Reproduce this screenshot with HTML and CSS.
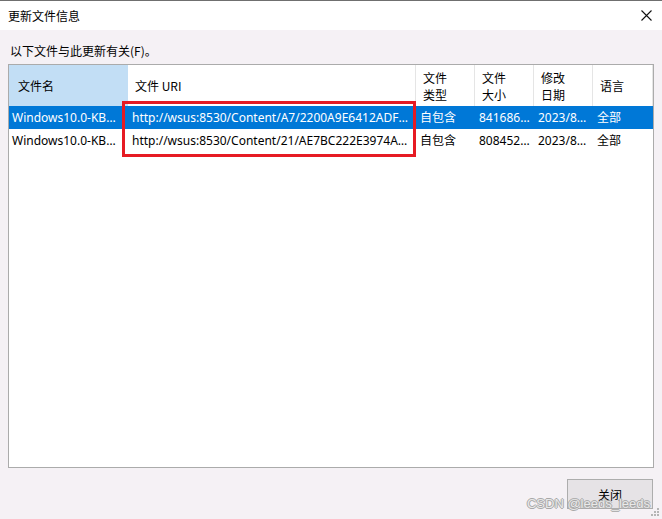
FILE: index.html
```html
<!DOCTYPE html>
<html lang="zh-CN">

<head>
    <meta charset="UTF-8">
    <meta name="viewport" content="width=device-width, initial-scale=1.0">
    <link rel="stylesheet" href="styles.css">
    <title>更新文件信息</title>
</head>

<body>
    <div class="dialog">
        <div class="titlebar">
            <span class="title">更新文件信息</span>
            <svg class="close" width="11" height="11" viewBox="0 0 11 11">
                <path d="M0.5 0.5 L10.5 10.5 M10.5 0.5 L0.5 10.5" stroke="#111" stroke-width="1.1" fill="none" />
            </svg>
        </div>

        <div class="client">
            <div class="label">以下文件与此更新有关(F)。</div>

            <div class="list">
                <div class="row header">
                    <div class="cell hot">文件名</div>
                    <div class="cell">文件 URI</div>
                    <div class="cell">文件<br>类型</div>
                    <div class="cell">文件<br>大小</div>
                    <div class="cell">修改<br>日期</div>
                    <div class="cell">语言</div>
                </div>
                <div class="row item selected">
                    <div class="cell">Windows10.0-KB5029244-x64.cab</div>
                    <div class="cell">http://wsus:8530/Content/A7/2200A9E6412ADF0123456789.cab</div>
                    <div class="cell">自包含</div>
                    <div class="cell">841686000</div>
                    <div class="cell">2023/8/8 15:00</div>
                    <div class="cell">全部</div>
                </div>
                <div class="row item">
                    <div class="cell">Windows10.0-KB5029244-x86.cab</div>
                    <div class="cell">http://wsus:8530/Content/21/AE7BC222E3974A0123456789.cab</div>
                    <div class="cell">自包含</div>
                    <div class="cell">808452000</div>
                    <div class="cell">2023/8/8 15:00</div>
                    <div class="cell">全部</div>
                </div>

                <!-- red marker around the URI column -->
                <div class="mark"></div>
            </div>

            <div class="actions">
                <button class="btn">关闭</button>
            </div>
        </div>

        <div class="watermark">CSDN @leeds_leeds</div>
        <div class="grip"></div>
    </div>
</body>

</html>
```

FILE: styles.css
```css
body {
    margin: 0;
    font-family: "Noto Sans", "Noto Sans CJK SC", sans-serif;
    font-size: 12px;
    color: #000;
}

.dialog {
    position: relative;
    width: 662px;
    height: 519px;
    display: flex;
    flex-direction: column;
    background: #f5f1f5;
    overflow: hidden;
}

.titlebar {
    height: 30px;
    border-top: 1px solid #6f6f6f;
    background: #fff;
    display: flex;
    align-items: center;
    justify-content: space-between;
    padding: 0 10px 0 8px;
}

.title {
    font-family: "Noto Sans CJK SC", sans-serif;
    font-size: 12px;
    margin-top: -1px;
}

.close {
    display: block;
    margin-top: -1px;
}

.client {
    flex: 1;
    display: flex;
    flex-direction: column;
    padding: 13px 8px 10px 8px;
}

.label {
    height: 16px;
    line-height: 16px;
    padding-left: 2px;
    font-family: "Noto Sans CJK SC", sans-serif;
}

.list {
    position: relative;
    margin-top: 5px;
    height: 402px;
    border: 1px solid #ababab;
    background: #fff;
}

.row {
    display: grid;
    grid-template-columns: 119px 288px 59px 59px 59px 60px;
}

.header .cell {
    height: 41px;
    display: flex;
    align-items: center;
    line-height: 17px;
    padding-left: 7px;
    border-right: 1px solid #e5e5e5;
    font-family: "Noto Sans CJK SC", sans-serif;
}

.header .cell:first-child {
    padding-left: 9px;
}

.header .hot {
    background: #c2def5;
    border-right-color: #c2def5;
}

.item .cell {
    height: 23px;
    line-height: 23px;
    padding: 0 4px;
    white-space: nowrap;
    overflow: hidden;
    text-overflow: ellipsis;
}

.item .cell:first-child {
    padding-left: 3px;
    padding-right: 6px;
}

.selected {
    background: #0078d7;
    color: #fff;
}

.mark {
    position: absolute;
    left: 113px;
    top: 36px;
    width: 288px;
    height: 50px;
    border: 3px solid #e61b23;
}

.actions {
    display: flex;
    justify-content: flex-end;
    margin-top: 11px;
}

.btn {
    width: 86px;
    height: 30px;
    margin-right: 1px;
    border: 1px solid #adadad;
    background: #e6e3e6;
    font-family: "Noto Sans CJK SC", sans-serif;
    font-size: 12px;
    color: #000;
    padding: 0;
}

/* light outlined watermark over the bottom-right corner */
.watermark {
    position: absolute;
    right: 12px;
    bottom: 8px;
    font-family: "Liberation Sans", sans-serif;
    font-size: 13px;
    color: #e9e9e9;
    text-shadow: 1px 0 0 #a8a8a8, -1px 0 0 #a8a8a8, 0 1px 0 #a8a8a8, 0 -1px 0 #a8a8a8;
}

.grip {
    position: absolute;
    right: 3px;
    bottom: 3px;
    width: 2px;
    height: 2px;
    background: #b5b5b5;
    box-shadow: -3px 0 #b5b5b5, -6px 0 #b5b5b5, 0 -3px #b5b5b5, -3px -3px #b5b5b5, 0 -6px #b5b5b5;
}
```
